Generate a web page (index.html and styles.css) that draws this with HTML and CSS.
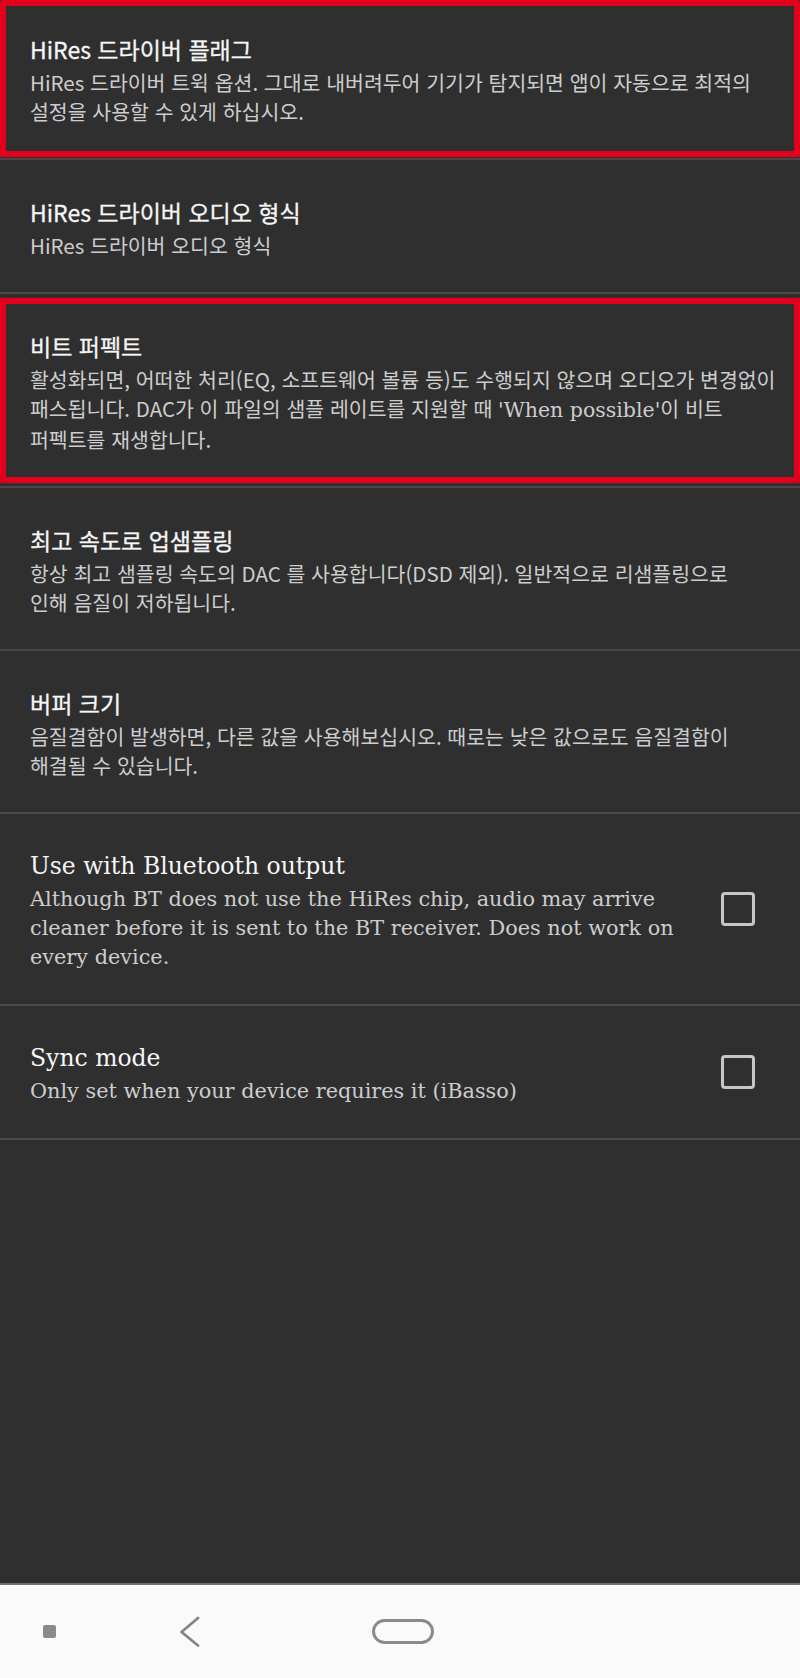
FILE: index.html
```html
<!DOCTYPE html>
<html lang="ko">
<head>
    <meta charset="UTF-8">
    <meta name="viewport" content="width=device-width, initial-scale=1.0">
    <title>HiRes 설정</title>
    <link rel="stylesheet" href="styles.css">
</head>
<body>

    <div class="screen">
        <ul class="prefs">
            <li class="pref marked">
                <div class="pref-text">
                    <div class="pref-title">HiRes 드라이버 플래그</div>
                    <div class="pref-summary">HiRes 드라이버 트윅 옵션. 그대로 내버려두어 기기가 탐지되면 앱이 자동으로 최적의<br>설정을 사용할 수 있게 하십시오.</div>
                </div>
            </li>
            <li class="pref">
                <div class="pref-text">
                    <div class="pref-title">HiRes 드라이버 오디오 형식</div>
                    <div class="pref-summary">HiRes 드라이버 오디오 형식</div>
                </div>
            </li>
            <li class="pref marked">
                <div class="pref-text">
                    <div class="pref-title">비트 퍼펙트</div>
                    <div class="pref-summary">활성화되면, 어떠한 처리(EQ, 소프트웨어 볼륨 등)도 수행되지 않으며 오디오가 변경없이<br>패스됩니다. DAC가 이 파일의 샘플 레이트를 지원할 때 <span class="latin">'When possible'</span>이 비트<br>퍼펙트를 재생합니다.</div>
                </div>
            </li>
            <li class="pref">
                <div class="pref-text">
                    <div class="pref-title">최고 속도로 업샘플링</div>
                    <div class="pref-summary">항상 최고 샘플링 속도의 DAC 를 사용합니다(DSD 제외). 일반적으로 리샘플링으로<br>인해 음질이 저하됩니다.</div>
                </div>
            </li>
            <li class="pref">
                <div class="pref-text">
                    <div class="pref-title">버퍼 크기</div>
                    <div class="pref-summary">음질결함이 발생하면, 다른 값을 사용해보십시오. 때로는 낮은 값으로도 음질결함이<br>해결될 수 있습니다.</div>
                </div>
            </li>
            <li class="pref pref-en">
                <div class="pref-text">
                    <div class="pref-title">Use with Bluetooth output</div>
                    <div class="pref-summary">Although BT does not use the HiRes chip, audio may arrive<br>cleaner before it is sent to the BT receiver. Does not work on<br>every device.</div>
                </div>
                <span class="checkbox"></span>
            </li>
            <li class="pref pref-en">
                <div class="pref-text">
                    <div class="pref-title">Sync mode</div>
                    <div class="pref-summary">Only set when your device requires it (iBasso)</div>
                </div>
                <span class="checkbox"></span>
            </li>
        </ul>

        <nav class="navbar">
            <span class="nav-recents"></span>
            <svg class="nav-back" width="22" height="32" viewBox="0 0 22 32">
                <path d="M19 2 L2.5 16 L19 29.5" fill="none" stroke="#858585" stroke-width="2.8" stroke-linecap="round" stroke-linejoin="round"/>
            </svg>
            <span class="nav-home"></span>
        </nav>
    </div>

</body>
</html>
```

FILE: styles.css
```css
* {
    margin: 0;
    padding: 0;
    box-sizing: border-box;
}

body {
    background: #2f2f2f;
    font-family: "Noto Sans CJK KR", "Noto Sans", sans-serif;
}

.screen {
    height: 1678px;
    display: flex;
    flex-direction: column;
}

/* preference list */
.prefs {
    flex: 1;
    list-style: none;
}

.pref {
    position: relative;
    display: flex;
    align-items: center;
    padding: 37px 10px 32px 30px;
    border-bottom: 2px solid #484848;
}

.pref:first-child {
    padding-top: 34px;
}

.pref-text {
    flex: 1;
}

.pref-title {
    font-size: 23px;
    font-weight: normal;
    line-height: 30px;
    color: #f6f6f6;
    -webkit-text-stroke: 0.3px #f6f6f6;
}

.pref-summary {
    margin-top: 4px;
    font-size: 20.5px;
    line-height: 29px;
    color: #cdcdcd;
}

.latin,
.pref-en .pref-title,
.pref-en .pref-summary {
    font-family: "DejaVu Serif", serif;
}

.latin {
    font-size: 20.5px;
}

.pref-en .pref-title {
    font-size: 23.5px;
    -webkit-text-stroke: 0;
}

.pref-en .pref-summary {
    font-size: 20.8px;
}

/* offset so the box sits in the middle of the whole row, not the padded content */
.checkbox {
    flex-shrink: 0;
    width: 34px;
    height: 34px;
    margin: -5px 35px 0 0;
    border: 3.5px solid #c6c6c6;
    border-radius: 4px;
}

/* red highlight frame */
.pref.marked::after {
    content: "";
    position: absolute;
    left: 0;
    right: 0;
    top: 4px;
    bottom: 3px;
    border: 6px solid #e2001c;
    border-radius: 2px;
    box-shadow: 0 0 2px rgba(226, 0, 28, 0.6);
    pointer-events: none;
}

.pref.marked:first-child::after {
    top: 0;
    bottom: 1px;
}

/* system navigation bar */
.navbar {
    height: 95px;
    flex-shrink: 0;
    display: flex;
    align-items: center;
    background: #fafafa;
    border-top: 2px solid #707070;
}

.nav-recents {
    width: 13px;
    height: 13px;
    margin-left: 43px;
    background: #8a8a8a;
    border-radius: 2px;
}

.nav-back {
    margin-left: 123px;
}

.nav-home {
    width: 62px;
    height: 25px;
    margin-left: 171px;
    border: 3px solid #8a8a8a;
    border-radius: 13px;
}
```
